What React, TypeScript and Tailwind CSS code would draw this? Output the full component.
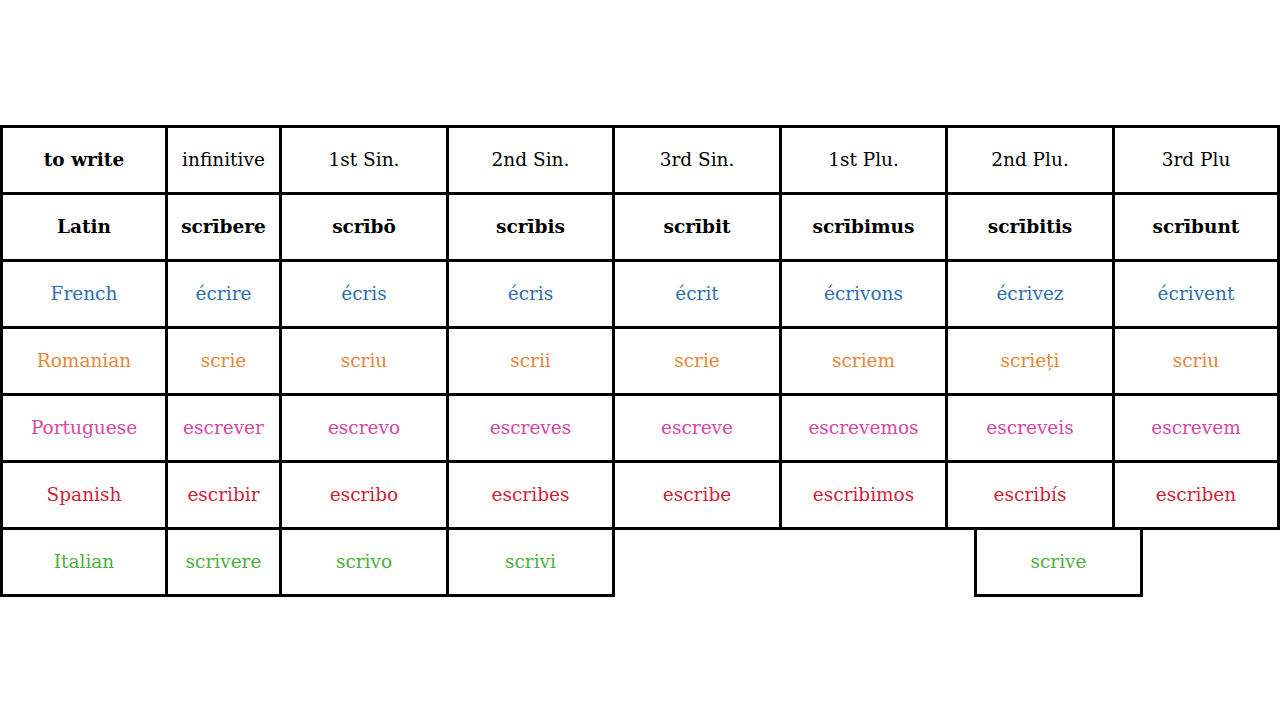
import React from "react";

const widths = [168, 114, 167, 166, 167, 166, 167, 165];

type Row = { cls: string; cells: string[]; boldFirst?: boolean };

const rows: Row[] = [
  { cls: "text-black", cells: ["to write", "infinitive", "1st Sin.", "2nd Sin.", "3rd Sin.", "1st Plu.", "2nd Plu.", "3rd Plu"], boldFirst: true },
  { cls: "text-black font-bold", cells: ["Latin", "scrībere", "scrībō", "scrībis", "scrībit", "scrībimus", "scrībitis", "scrībunt"] },
  { cls: "text-[#2e6fb2]", cells: ["French", "écrire", "écris", "écris", "écrit", "écrivons", "écrivez", "écrivent"] },
  { cls: "text-[#e5873a]", cells: ["Romanian", "scrie", "scriu", "scrii", "scrie", "scriem", "scrieți", "scriu"] },
  { cls: "text-[#d645a8]", cells: ["Portuguese", "escrever", "escrevo", "escreves", "escreve", "escrevemos", "escreveis", "escrevem"] },
  { cls: "text-[#cf1f3c]", cells: ["Spanish", "escribir", "escribo", "escribes", "escribe", "escribimos", "escribís", "escriben"] },
];

const italian = ["Italian", "scrivere", "scrivo", "scrivi"];

export default function App() {
  return (
    <div
      className="w-[1280px] h-[720px] bg-white overflow-hidden pt-[125px]"
      style={{ fontFamily: '"DejaVu Serif", serif' }}
    >
      <div className="flex flex-col">
        {rows.map((r, ri) => (
          <div key={ri} className="flex">
            {r.cells.map((c, ci) => (
              <div
                key={ci}
                style={{ width: widths[ci] }}
                className={
                  "h-[67px] shrink-0 flex items-center justify-center border-black border-r-[3px] border-b-[3px] text-[18.5px] " +
                  (ci === 0 ? "border-l-[3px] " : "") +
                  (ri === 0 ? "border-t-[3px] h-[70px] " : "") +
                  r.cls +
                  (r.boldFirst && ci === 0 ? " font-bold" : "")
                }
              >
                {c}
              </div>
            ))}
          </div>
        ))}
        <div className="flex">
          {italian.map((c, ci) => (
            <div
              key={ci}
              style={{ width: widths[ci] }}
              className={
                "h-[67px] shrink-0 flex items-center justify-center border-black border-r-[3px] border-b-[3px] text-[18.5px] text-[#4cb03c] " +
                (ci === 0 ? "border-l-[3px] " : "")
              }
            >
              {c}
            </div>
          ))}
          <div className="ml-[359px] w-[169px] h-[67px] shrink-0 flex items-center justify-center border-black border-l-[3px] border-r-[3px] border-b-[3px] text-[18.5px] text-[#4cb03c]">
            scrive
          </div>
        </div>
      </div>
    </div>
  );
}
